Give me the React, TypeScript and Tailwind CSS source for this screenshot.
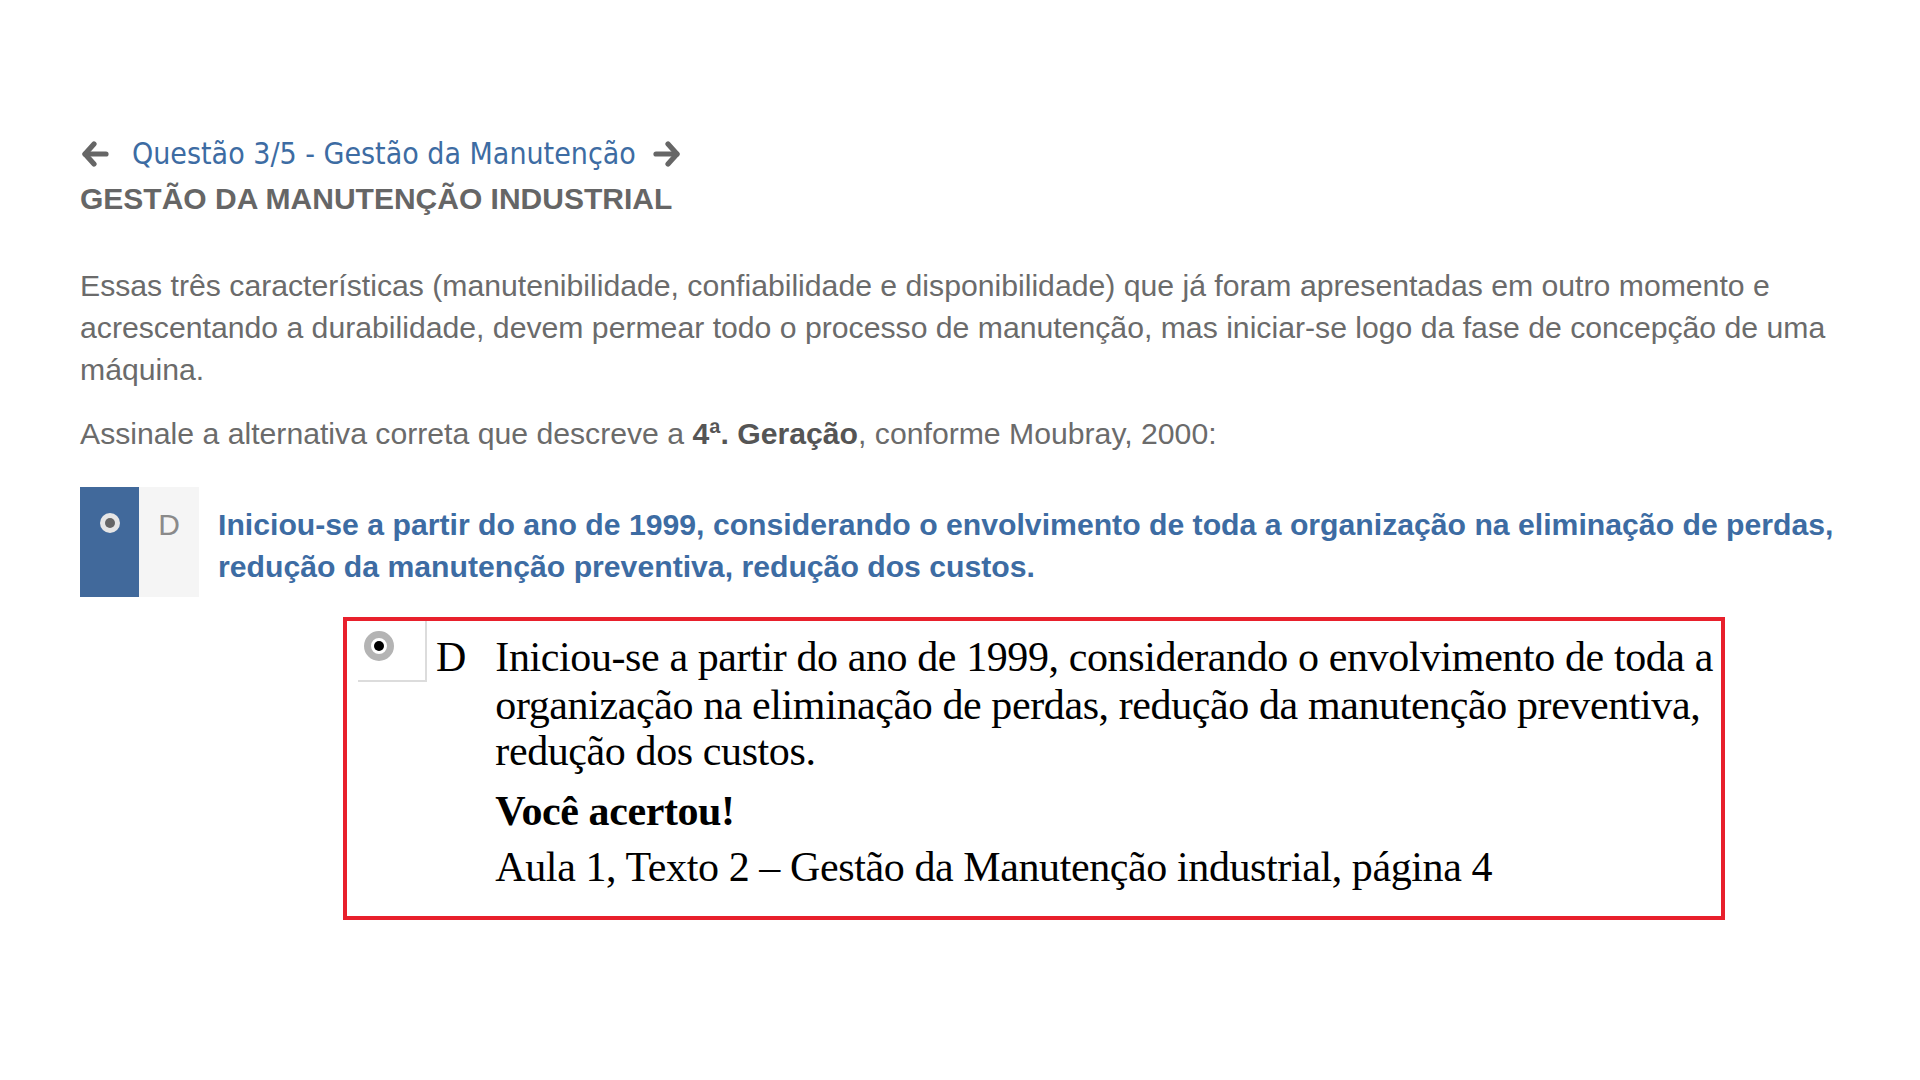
import React from 'react';

const sans = { fontFamily: '"Liberation Sans", Arial, sans-serif' };
const serif = { fontFamily: '"Liberation Serif", "Times New Roman", serif' };

const NavArrow = ({ dir }: { dir: 'left' | 'right' }) => (
  <svg width="30" height="30" viewBox="0 0 30 30" className={dir === 'right' ? 'rotate-180' : ''}>
    <g stroke="#666666" strokeWidth="5.2" strokeLinecap="round" strokeLinejoin="round" fill="none">
      <path d="M5 15 H26" />
      <path d="M14 5 L5 15 L14 25" />
    </g>
  </svg>
);

const App = () => {
  return (
    <div className="min-h-screen w-full bg-white pl-[80px] pr-[40px] pt-[137px]" style={sans}>
      {/* Navegação da questão */}
      <div className="flex items-center h-[34px]">
        <NavArrow dir="left" />
        <span
          className="ml-[22px] mr-[16px] text-[30px] leading-none text-[#3d6ca3]"
          style={{ fontFamily: '"DejaVu Sans Condensed", "DejaVu Sans", sans-serif', fontStretch: 'condensed' }}
        >
          Questão 3/5 - Gestão da Manutenção
        </span>
        <NavArrow dir="right" />
      </div>
      <h1 className="mt-[10px] text-[30px] leading-[36px] font-bold text-[#666666]">
        GESTÃO DA MANUTENÇÃO INDUSTRIAL
      </h1>

      {/* Enunciado */}
      <div className="mt-[48px] text-[30.2px] leading-[42px] text-[#6b6b6b] whitespace-nowrap">
        <p>
          Essas três características (manutenibilidade, confiabilidade e disponibilidade) que já foram apresentadas em outro momento e
          <br />
          acrescentando a durabilidade, devem permear todo o processo de manutenção, mas iniciar-se logo da fase de concepção de uma
          <br />
          máquina.
        </p>
        <p className="mt-[22px]">
          Assinale a alternativa correta que descreve a <b className="text-[#555555]">4ª. Geração</b>, conforme Moubray, 2000:
        </p>
      </div>

      {/* Alternativa marcada */}
      <div className="mt-[32px] flex">
        <div className="w-[59px] h-[110px] bg-[#41699b] flex justify-center pt-[26px]">
          <div className="w-[20px] h-[20px] rounded-full bg-[#e6e6e6] flex items-center justify-center">
            <div className="w-[10px] h-[10px] rounded-full bg-[#666666]" />
          </div>
        </div>
        <div className="w-[60px] h-[110px] bg-[#f5f5f5] flex justify-center pt-[17px]">
          <span className="text-[30px] leading-[42px] text-[#8a8a8a]">D</span>
        </div>
        <p className="ml-[19px] pt-[17px] text-[30.2px] leading-[42px] font-bold text-[#3d6ca3] whitespace-nowrap">
          Iniciou-se a partir do ano de 1999, considerando o envolvimento de toda a organização na eliminação de perdas,
          <br />
          redução da manutenção preventiva, redução dos custos.
        </p>
      </div>

      {/* Recorte da correção */}
      <div className="mt-[20px] ml-[263px] w-[1382px] h-[303px] border-[4px] border-[#e8202c] bg-white flex" style={serif}>
        <div className="ml-[11px] w-[69px] h-[61px] border-r-2 border-b-2 border-[#dcdcdc] pl-[6px] pt-[10px]">
          <div className="w-[30px] h-[30px] rounded-full border-[7px] border-[#b4b4b4] bg-white flex items-center justify-center">
            <div className="w-[10px] h-[10px] rounded-full bg-black" />
          </div>
        </div>
        <div className="ml-[9px] pt-[11px] text-[42px] leading-[50px] text-black">D</div>
        <div className="ml-[29px] pt-[11px] text-[42px] text-black tracking-[-0.4px] whitespace-nowrap">
          <div className="leading-[50px]">Iniciou-se a partir do ano de 1999, considerando o envolvimento de toda a</div>
          <div className="leading-[46px]">organização na eliminação de perdas, redução da manutenção preventiva,</div>
          <div className="leading-[46px]">redução dos custos.</div>
          <div className="mt-[12px] leading-[50px] font-bold">Você acertou!</div>
          <div className="mt-[6px] leading-[50px]">Aula 1, Texto 2 – Gestão da Manutenção industrial, página 4</div>
        </div>
      </div>
    </div>
  );
};

export default App;
